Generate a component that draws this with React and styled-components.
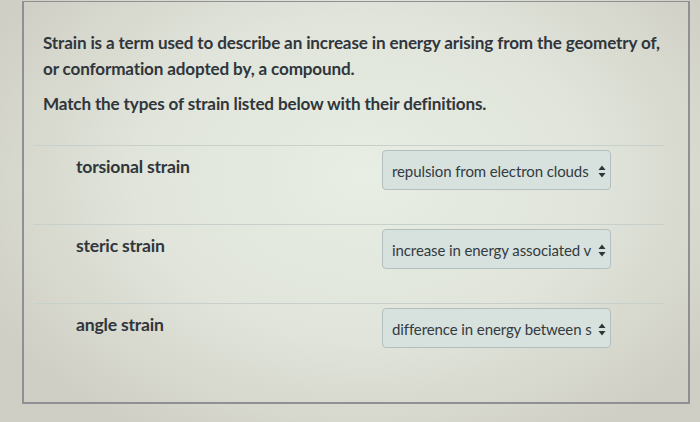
import React from 'react';
import styled, { createGlobalStyle } from 'styled-components';

const Global = createGlobalStyle`
  html, body {
    margin: 0;
    padding: 0;
  }
  body {
    width: 700px;
    height: 422px;
    overflow: hidden;
    font-family: Lato, "Open Sans", sans-serif;
    background: radial-gradient(ellipse 60% 70% at 52% 42%, #e8eee4 0%, #e0e4da 55%, #d0cfc5 100%);
  }
`;

const Page = styled.div`
  padding: 1px 10px 0 22px;
  height: 421px;
  box-sizing: border-box;
`;

const Panel = styled.div`
  height: 403px;
  box-sizing: border-box;
  border: 2px solid #8e9096;
  border-top-width: 1px;
  padding: 28px 20px 0 10px;
`;

const Intro = styled.p`
  margin: 0 0 9px 9px;
  font-size: 17.1px;
  line-height: 26px;
  font-weight: 700;
  color: #30363b;
  letter-spacing: -0.15px;
  white-space: nowrap;
`;

const List = styled.div`
  margin-top: 28px;
  margin-right: 4px;
`;

const Row = styled.div`
  display: grid;
  grid-template-columns: 264px 229px;
  column-gap: 42px;
  height: 79px;
  border-top: 1px solid #c8d0cb;
  padding-left: 42px;
  box-sizing: border-box;
`;

const Label = styled.div`
  padding-top: 11px;
  font-size: 17.6px;
  line-height: 20px;
  font-weight: 700;
  color: #30363b;
  letter-spacing: -0.2px;
`;

const Select = styled.div`
  margin-top: 4px;
  height: 40px;
  box-sizing: border-box;
  display: flex;
  align-items: center;
  gap: 3px;
  padding: 2px 4px 0 9px;
  background: #d7e2de;
  border: 1px solid #b3bfbe;
  border-radius: 4px;
  font-size: 15px;
  color: #343a3e;
  letter-spacing: -0.1px;
  white-space: nowrap;
  overflow: hidden;
`;

const Choice = styled.span`
  flex: 1;
  overflow: hidden;
`;

const Arrows = () => (
  <svg width="8" height="13" viewBox="0 0 8 13" style={{ flexShrink: 0 }}>
    <path d="M4 0.5 L7.5 5 L0.5 5 Z" fill="#2f353a" />
    <path d="M4 12.5 L7.5 8 L0.5 8 Z" fill="#2f353a" />
  </svg>
);

const rows = [
  { term: 'torsional strain', choice: 'repulsion from electron clouds' },
  { term: 'steric strain', choice: 'increase in energy associated v' },
  { term: 'angle strain', choice: 'difference in energy between s' },
];

export default function App() {
  return (
    <>
      <Global />
      <Page>
        <Panel>
          <Intro>
            Strain is a term used to describe an increase in energy arising from the geometry of,
            <br />
            or conformation adopted by, a compound.
          </Intro>
          <Intro>Match the types of strain listed below with their definitions.</Intro>
          <List>
            {rows.map((r) => (
              <Row key={r.term}>
                <Label>{r.term}</Label>
                <Select>
                  <Choice>{r.choice}</Choice>
                  <Arrows />
                </Select>
              </Row>
            ))}
          </List>
        </Panel>
      </Page>
    </>
  );
}
